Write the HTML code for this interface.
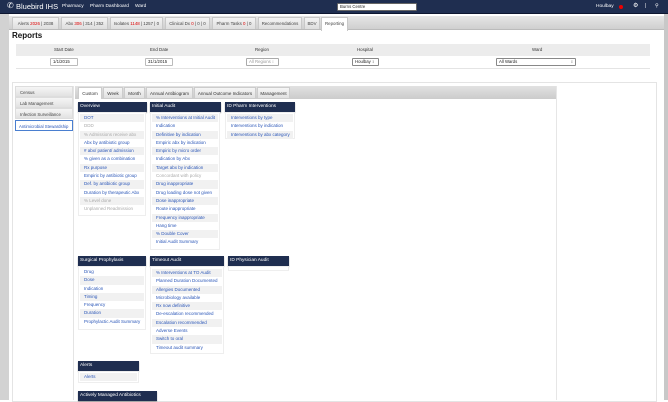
<!DOCTYPE html>
<html><head><meta charset="utf-8"><style>
*{margin:0;padding:0;box-sizing:border-box}
body{width:668px;height:400px;overflow:hidden;background:#fff;font-family:"Liberation Sans",sans-serif;position:relative;color:#222}
.a{position:absolute}
.nav{left:0;top:0;width:668px;height:14px;background:#1f2e50;border-bottom:1px solid #0d1630}
.nav span{position:absolute;color:#fff;white-space:nowrap}
.tab{position:absolute;top:17px;height:12px;font-size:4.4px;line-height:12px;text-align:center;color:#444;border:1px solid #c8c8c8;border-bottom:none;background:linear-gradient(#f4f4f4,#dedede);white-space:nowrap}
.r{color:#d00}
.ph{position:absolute;height:10px;background:#1f2e50;color:#fff;font-size:4.8px;line-height:10px;padding-left:2px;white-space:nowrap;box-shadow:0 1px 1px #999}
.pb{position:absolute;border:1px solid #eee;background:#fff}
.pb div{height:8.3px;line-height:8.3px;font-size:4.5px;color:#2a56b8;padding-left:4px;margin:0 1px;white-space:nowrap}
.pb div:nth-child(odd){background:#f1f1f1}
.pb div.g{color:#aaa}
.ln{position:absolute;height:11px;font-size:4.3px;line-height:11px;color:#444;padding-left:4px;border:1px solid #ddd;background:linear-gradient(#f5f5f5,#e2e2e2);white-space:nowrap;overflow:hidden}
.st{position:absolute;top:87px;height:11px;font-size:4.5px;line-height:11px;text-align:center;color:#333;border:1px solid #ccc;border-bottom:none;background:linear-gradient(#f6f6f6,#e0e0e0)}
.inp{position:absolute;height:8px;border:1px solid #888;border-radius:1px;font-size:4.3px;line-height:6px;padding-left:2px;background:#fff;white-space:nowrap}
.lbl{position:absolute;top:47px;font-size:4.4px;color:#333;white-space:nowrap}
</style></head><body>
<div class="a" style="left:0;top:0;width:9px;height:400px;background:#d2d2d2"></div>
<div class="a" style="left:664px;top:0;width:4px;height:400px;background:#c8c8c8"></div>
<div class="a nav">
<span style="left:7px;top:1px;font-size:8px">&#x2706;</span>
<span style="left:16px;top:2px;font-size:7.5px">Bluebird IHS</span>
<span style="left:62px;top:4px;font-size:4.8px">Pharmacy</span>
<span style="left:90px;top:4px;font-size:4.8px">Pharm Dashboard</span>
<span style="left:135px;top:4px;font-size:4.8px">Ward</span>
<div class="inp" style="left:337px;top:3px;width:80px;color:#222;border-color:#666">Burns Centre<span style="position:absolute;right:2px;top:0">&#8597;</span></div>
<span style="left:596px;top:4px;font-size:4.8px">Houlbay</span>
<span style="left:619px;top:5px;width:4px;height:4px;border-radius:2px;background:#e00"></span>
<span style="left:633px;top:2px;font-size:6px">&#9881;</span>
<span style="left:645px;top:3px;font-size:5px">|</span>
<span style="left:655px;top:3px;font-size:5px">&#9906;</span>
</div>
<div class="a" style="left:9px;top:16px;width:655px;height:14px;background:linear-gradient(#e6e6e6,#cfcfcf);border-bottom:1px solid #bbb"></div>
<div class="tab" style="left:12px;width:47px">Alerts <span class="r">2026</span> | 2038</div>
<div class="tab" style="left:61px;width:47px">Abx <span class="r">306</span> | 314 | 352</div>
<div class="tab" style="left:110px;width:53px">Isolates <span class="r">1148</span> | 1257 | 0</div>
<div class="tab" style="left:165px;width:45px">Clinical Dx <span class="r">0</span> | 0 | 0</div>
<div class="tab" style="left:212px;width:44px">Pharm Tasks <span class="r">0</span> | 0</div>
<div class="tab" style="left:258px;width:44px">Recommendations</div>
<div class="tab" style="left:304px;width:16px">BDV</div>
<div class="tab" style="left:321px;width:27px;background:#fff;height:14px">Reporting</div>
<div class="a" style="left:12px;top:31px;font-size:8px;font-weight:bold;color:#111">Reports</div>
<div class="a" style="left:16px;top:44px;width:634px;height:12px;background:#ececec"></div>
<div class="a" style="left:16px;top:68px;width:634px;height:1px;background:#e4e4e4"></div>
<div class="lbl" style="left:54px">Start Date</div>
<div class="lbl" style="left:150px">End Date</div>
<div class="lbl" style="left:255px">Region</div>
<div class="lbl" style="left:357px">Hospital</div>
<div class="lbl" style="left:532px">Ward</div>
<div class="inp" style="left:50px;top:58px;width:28px;border-color:#bbb">1/1/2015</div>
<div class="inp" style="left:145px;top:58px;width:28px;border-color:#bbb">31/1/2015</div>
<div class="inp" style="left:246px;top:58px;width:33px;border-color:#aaa;color:#999">All Regions &#8597;</div>
<div class="inp" style="left:352px;top:58px;width:27px">Houlbay &#8597;</div>
<div class="inp" style="left:496px;top:58px;width:80px">All Wards<span style="position:absolute;right:2px;top:0">&#8597;</span></div>
<div class="a" style="left:12px;top:82px;width:645px;height:320px;border:1px solid #e4e4e4"></div>
<div class="a" style="left:73px;top:86px;width:1px;height:314px;background:#e4e4e4"></div>
<div class="ln" style="left:15px;top:86px;width:58px">Census</div>
<div class="ln" style="left:15px;top:97px;width:58px">Lab Management</div>
<div class="ln" style="left:15px;top:108px;width:58px">Infection Surveillance</div>
<div class="ln" style="left:15px;top:120px;width:58px;background:#fff;border:1px solid #4a7fd0;color:#2a56b8;padding-left:3px">Antimicrobial Stewardship</div>
<div class="a" style="left:75px;top:86px;width:481px;height:13px;background:linear-gradient(#e2e2e2,#cbcbcb)"></div>
<div class="a" style="left:556px;top:86px;width:1px;height:314px;background:#e6e6e6"></div>
<div class="st" style="left:78px;width:24px;background:#fff;height:12px">Custom</div>
<div class="st" style="left:103px;width:20px">Week</div>
<div class="st" style="left:124px;width:21px">Month</div>
<div class="st" style="left:146px;width:47px">Annual Antibiogram</div>
<div class="st" style="left:194px;width:62px">Annual Outcome Indicators</div>
<div class="st" style="left:257px;width:33px">Management</div>

<div class="ph" style="left:78px;top:102px;width:69px">Overview</div>
<div class="pb" style="left:78px;top:112px;width:68px;height:104px;padding-top:1px">
<div>DOT</div><div class="g">DDD</div><div class="g">% Admissions receive abx</div><div>Abx by antibiotic group</div><div># abx/ patient/ admission</div><div>% given as a combination</div><div>Rx purpose</div><div>Empiric by antibiotic group</div><div>Def. by antibiotic group</div><div>Duration by therapeutic Abx</div><div class="g">% Level done</div><div class="g">Unplanned Readmission</div></div>

<div class="ph" style="left:150px;top:102px;width:71px">Initial Audit</div>
<div class="pb" style="left:150px;top:112px;width:70px;height:138px;padding-top:1px">
<div>% Interventions at Initial Audit</div><div>Indication</div><div>Definitive by indication</div><div>Empiric abx by indication</div><div>Empiric by micro order</div><div>Indication by Abx</div><div>Target abx by indication</div><div class="g">Concordant with policy</div><div>Drug inappropriate</div><div>Drug loading dose not given</div><div>Dose inappropriate</div><div>Route inappropriate</div><div>Frequency inappropriate</div><div>Hang time</div><div>% Double Cover</div><div>Initial Audit Summary</div></div>

<div class="ph" style="left:225px;top:102px;width:70px">ID Pharm Interventions</div>
<div class="pb" style="left:225px;top:112px;width:70px;height:27px;padding-top:1px">
<div>Interventions by type</div><div>Interventions by indication</div><div>Interventions by abx category</div></div>

<div class="ph" style="left:78px;top:256px;width:68px">Surgical Prophylaxis</div>
<div class="pb" style="left:78px;top:266px;width:68px;height:64px;padding-top:1px">
<div style="background:#fff">Drug</div><div style="background:#f1f1f1">Dose</div><div style="background:#fff">Indication</div><div style="background:#f1f1f1">Timing</div><div style="background:#fff">Frequency</div><div style="background:#f1f1f1">Duration</div><div style="background:#fff">Prophylactic Audit Summary</div></div>

<div class="ph" style="left:150px;top:256px;width:74px">Timeout Audit</div>
<div class="pb" style="left:150px;top:266px;width:74px;height:88px;padding-top:2px">
<div>% Interventions at TO Audit</div><div>Planned Duration Documented</div><div>Allergies Documented</div><div>Microbiology available</div><div>Rx now definitive</div><div>De-escalation recommended</div><div>Escalation recommended</div><div>Adverse Events</div><div>Switch to oral</div><div>Timeout audit summary</div></div>

<div class="ph" style="left:228px;top:256px;width:61px">ID Physician Audit</div>
<div class="pb" style="left:228px;top:266px;width:61px;height:5px"></div>

<div class="ph" style="left:78px;top:361px;width:61px">Alerts</div>
<div class="pb" style="left:78px;top:371px;width:61px;height:12px;padding-top:1px"><div>Alerts</div></div>

<div class="ph" style="left:78px;top:391px;width:79px">Actively Managed Antibiotics</div>
</body></html>
